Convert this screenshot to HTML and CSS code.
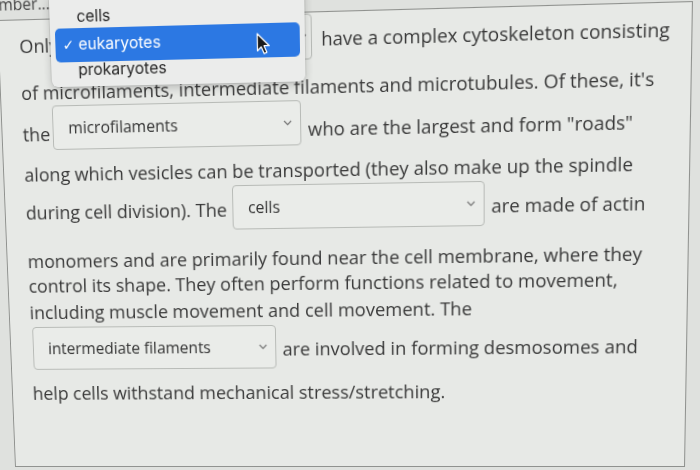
FILE: index.html
```html
<!DOCTYPE html>
<html lang="en">
<head>
<meta charset="utf-8">
<title>Cytoskeleton</title>
<link rel="stylesheet" href="styles.css">
</head>
<body>
<div class="screen">
  <div class="topstrip"><span class="crumb">mber...</span></div>
  <div class="panel">
    <div class="row sel">Only<div class="dd open"><span class="dd-val">eukaryotes</span><svg class="chev" width="9" height="6" viewBox="0 0 9 6"><path d="M1 1 L4.5 4.6 L8 1" fill="none" stroke="#777" stroke-width="1.2"/></svg>
        <div class="menu">
          <div class="mi c1">cells</div>
          <div class="mi on"><span class="check">✓</span>eukaryotes</div>
          <div class="mi c3">prokaryotes</div>
          <svg class="cursor" width="15" height="22" viewBox="0 0 15 22"><path d="M1.5 1 L1.5 17.5 L5.3 13.8 L8.2 20.3 L10.9 19.1 L8.1 12.7 L13.4 12.7 Z" fill="#1a1a1a" stroke="#fff" stroke-width="1.2" stroke-linejoin="round"/></svg>
        </div>
      </div>have a complex cytoskeleton consisting</div>
    <div class="row r2">of microfilaments, intermediate filaments and microtubules. Of these, it's</div>
    <div class="row sel r3">the<div class="dd"><span class="dd-val">microfilaments</span><svg class="chev" width="9" height="6" viewBox="0 0 9 6"><path d="M1 1 L4.5 4.6 L8 1" fill="none" stroke="#777" stroke-width="1.2"/></svg></div>who are the largest and form "roads"</div>
    <div class="row r4">along which vesicles can be transported (they also make up the spindle</div>
    <div class="row sel r5">during cell division). The<div class="dd"><span class="dd-val">cells</span><svg class="chev" width="9" height="6" viewBox="0 0 9 6"><path d="M1 1 L4.5 4.6 L8 1" fill="none" stroke="#777" stroke-width="1.2"/></svg></div>are made of actin</div>
    <div class="row r6">monomers and are primarily found near the cell membrane, where they</div>
    <div class="row r7">control its shape. They often perform functions related to movement,</div>
    <div class="row r8">including muscle movement and cell movement. The</div>
    <div class="row sel r9"><div class="dd first"><span class="dd-val">intermediate filaments</span><svg class="chev" width="9" height="6" viewBox="0 0 9 6"><path d="M1 1 L4.5 4.6 L8 1" fill="none" stroke="#777" stroke-width="1.2"/></svg></div>are involved in forming desmosomes and</div>
    <div class="row r10">help cells withstand mechanical stress/stretching.</div>
  </div>
</div>
</body>
</html>
```
FILE: styles.css
```css
html, body {
  margin: 0;
  width: 700px;
  height: 470px;
  overflow: hidden;
  background: #dfe1de;
}

.screen {
  width: 700px;
  height: 470px;
  display: flex;
  flex-direction: column;
  transform-origin: 0 0;
  transform: matrix3d(0.970558, -0.027676, 0, -0.000059263, 0.041095, 1.028529, 0, 0.000084777, 0, 0, 1, 0, -9.3165, 7.8237, 0, 0.999339);
  font-family: "Open Sans", "Liberation Sans", sans-serif;
  color: #393939;
  filter: blur(0.3px);
}

.topstrip {
  flex: none;
  height: 12px;
  padding-left: 8px;
}

.crumb {
  display: block;
  margin-top: -11px;
  font-size: 16px;
  line-height: 16px;
  color: #444;
}

.panel {
  flex: none;
  position: relative;
  margin-left: 6px;
  width: 688px;
  height: 452px;
  box-sizing: border-box;
  border: 1px solid #8f918e;
  background: #e7e9e6;
  padding: 0 0 0 21px;
}

.row {
  display: flex;
  align-items: center;
  height: 27px;
  line-height: 27px;
  font-size: 18.5px;
  white-space: nowrap;
}

.row.sel { height: 48px; }

.r2 { margin-top: 8.5px; }
.r3 { margin-top: 3.5px; }
.r4 { margin-top: 2.5px; }
.r5 { margin-top: 1px; }
.r6 { margin-top: 11px; }
.r7 { margin-top: -2px; }
.r9 { margin-top: 1.5px; }
.r10 { margin-top: 6.5px; }

.dd {
  position: relative;
  flex: none;
  width: 253px;
  height: 44px;
  box-sizing: border-box;
  margin: 0 6.5px 3px 5.5px;
  padding-left: 15px;
  border: 1px solid #b8bbb7;
  border-radius: 4px;
  background: #eaece9;
  display: flex;
  align-items: center;
  justify-content: space-between;
  font-size: 16px;
  line-height: 20px;
  color: #333;
}

.dd.open {
  width: 251px;
  margin-right: 9px;
}

.r3 .dd {
  margin-left: 3px;
  margin-bottom: 11px;
}

.dd.first { margin-left: 2px; }

.chev { margin-right: 8px; flex: none; }

.dd.open .chev { margin-right: 4px; }

.menu {
  position: absolute;
  left: -14.3px;
  top: -26.5px;
  width: 257px;
  height: 91px;
  box-sizing: border-box;
  padding: 12px 0 0;
  background: #ebeceb;
  border-radius: 6px;
  box-shadow: 0 3px 8px rgba(0, 0, 0, 0.2), 0 0 0 0.5px rgba(0, 0, 0, 0.14);
  font-family: Inter, "Liberation Sans", sans-serif;
  font-size: 16px;
  color: #262626;
  z-index: 5;
}

.mi {
  padding-left: 27.5px;
}

.mi.c1 {
  height: 22px;
  line-height: 20px;
}

.mi.on {
  height: 33px;
  line-height: 31px;
  margin: 0 5px;
  padding-left: 23.5px;
  background: #2c78e3;
  color: #fff;
  border-radius: 5px;
}

.mi.c3 {
  height: 24px;
  line-height: 14px;
}

.check {
  display: inline-block;
  width: 16px;
  margin-left: -16px;
  font-family: "DejaVu Sans", sans-serif;
  font-size: 14px;
}

.cursor {
  position: absolute;
  left: 208px;
  top: 43px;
}
```
